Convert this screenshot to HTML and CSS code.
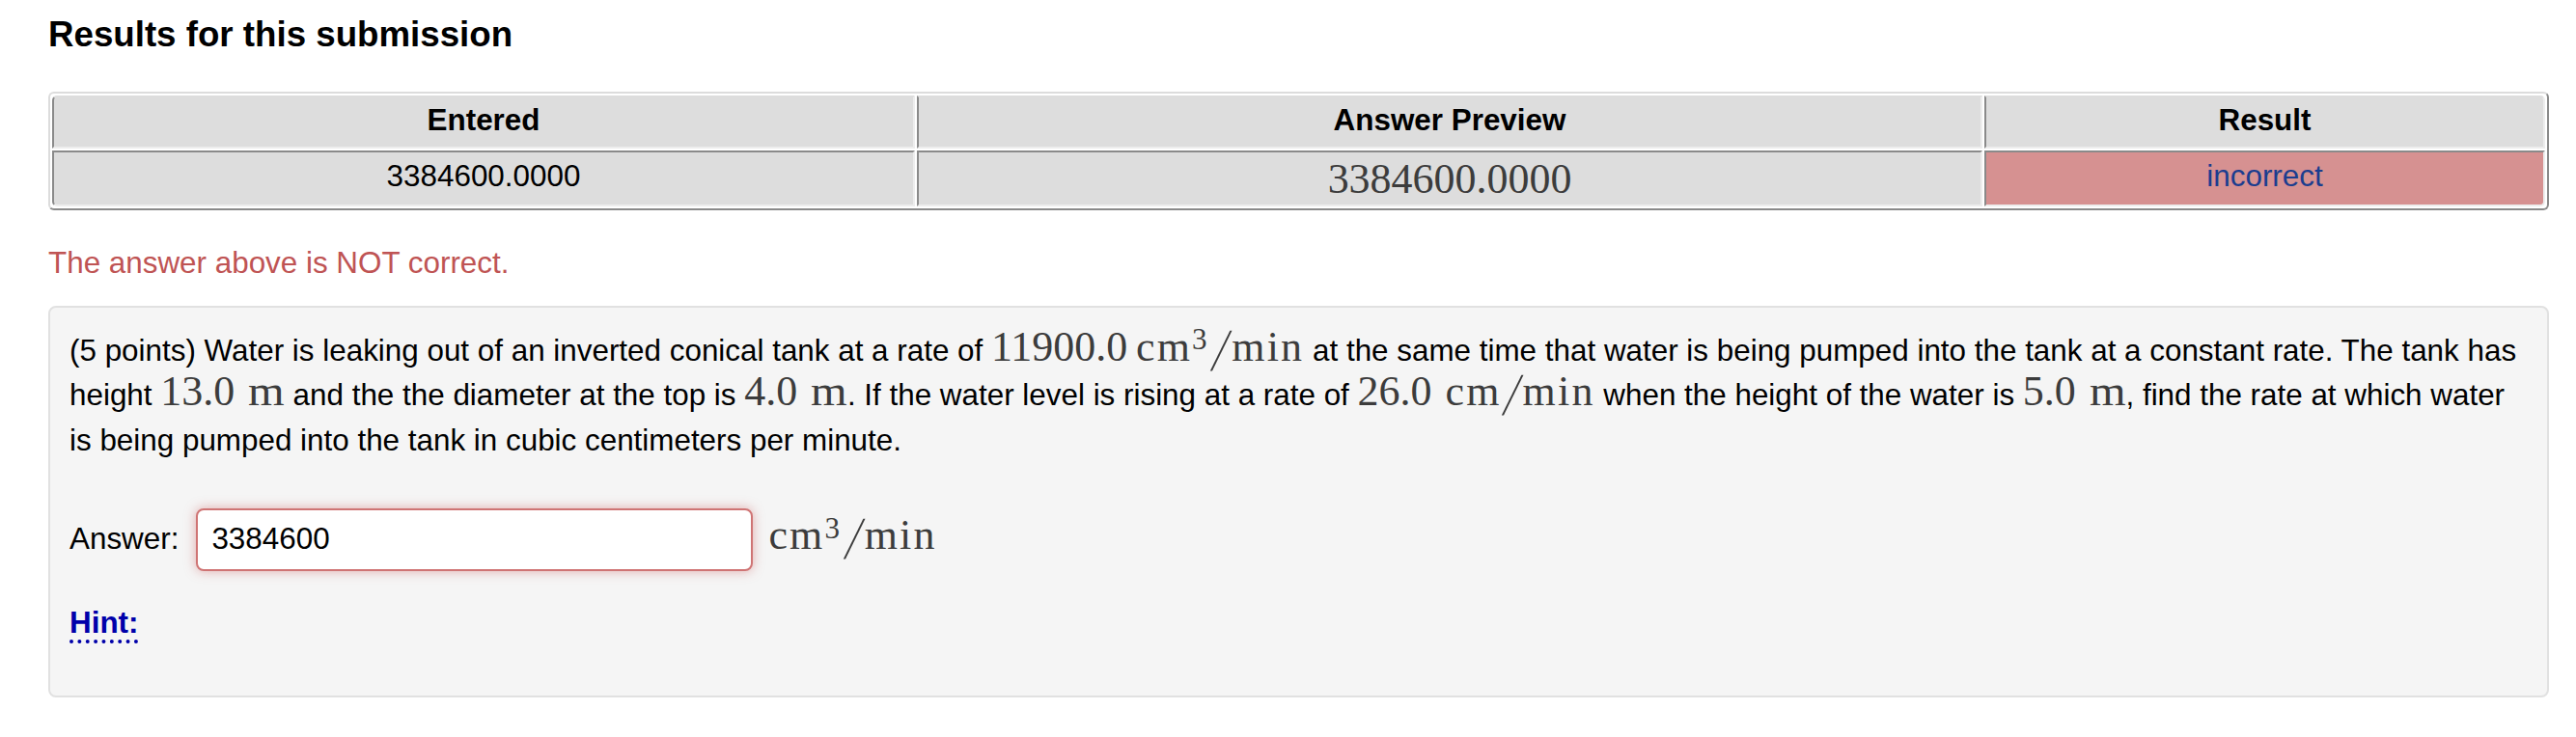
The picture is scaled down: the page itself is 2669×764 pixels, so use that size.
FILE: index.html
```html
<!DOCTYPE html>
<html lang="en">
<head>
<meta charset="utf-8">
<title>Results for this submission</title>
<link rel="stylesheet" href="styles.css">
</head>
<body>
<div class="page">
  <h3 class="title">Results for this submission</h3>
  <table class="results">
    <tr>
      <th class="c1">Entered</th>
      <th class="c2">Answer Preview</th>
      <th class="c3">Result</th>
    </tr>
    <tr>
      <td>3384600.0000</td>
      <td><span class="m preview">3384600.0000</span></td>
      <td class="bad">incorrect</td>
    </tr>
  </table>
  <p class="msg">The answer above is NOT correct.</p>
  <div class="problem">
    <p class="qtext">(5 points) Water is leaking out of an inverted conical tank at a rate of <span class="m">11900.0<span class="thin"></span><span class="u">cm</span><sup>3</sup><span class="sl">/</span><span class="u">min</span></span> at the same time that water is being pumped into the tank at a constant rate. The tank has height <span class="m">13.0<span class="sp"></span><span class="mm">m</span></span> and the the diameter at the top is <span class="m">4.0<span class="sp"></span><span class="mm">m</span></span>. If the water level is rising at a rate of <span class="m">26.0<span class="sp"></span><span class="u">cm</span><span class="sl">/</span><span class="u">min</span></span> when the height of the water is <span class="m">5.0<span class="sp"></span><span class="mm">m</span></span>, find the rate at which water is being pumped into the tank in cubic centimeters per minute.</p>
    <div class="answer-line"><span class="lbl">Answer:</span><input class="ans" type="text" value="3384600"><span class="m units"><span class="u">cm</span><sup>3</sup><span class="sl">/</span><span class="u">min</span></span></div>
    <div class="hint"><a class="knowl">Hint:</a></div>
  </div>
</div>
</body>
</html>
```

FILE: styles.css
```css
body {
  margin: 0;
  background: #ffffff;
  color: #000000;
  font-family: "Liberation Sans", Arial, sans-serif;
  font-size: 31.4px;
}

.page {
  width: 2591px;
  margin-left: 50px;
  padding-top: 1px;
}

.title {
  font-size: 36.7px;
  font-weight: bold;
  line-height: 42px;
  margin: 13.6px 0 38.4px;
}

/* results table */
.results {
  width: 2591px;
  table-layout: fixed;
  border-collapse: separate;
  border-spacing: 2px;
  border: 2px solid;
  border-color: #dcdcdc #8a8a8a #8a8a8a #dcdcdc;
  border-radius: 6px;
}

.results th,
.results td {
  box-sizing: border-box;
  background: #dddddd;
  text-align: center;
  border: 2px solid;
  line-height: 45px;
  white-space: nowrap;
}

.results th {
  font-weight: bold;
  padding: 1px 4px 5px;
  border-color: #dddddd #ededed #ededed #8a8a8a;
}

.results td {
  padding: 2px 4px 7px;
  border-color: #8a8a8a #ededed #ededed #8a8a8a;
}

.results .c1 { width: 894px; }
.results .c2 { width: 1104px; }
.results .c3 { width: 581px; }

.results tr:first-child th:first-child { border-top-left-radius: 5px; }
.results tr:first-child th:last-child { border-top-right-radius: 5px; }
.results tr:last-child td:first-child { border-bottom-left-radius: 5px; }
.results tr:last-child td:last-child { border-bottom-right-radius: 5px; }

.results td.bad {
  background: #d69191;
  color: #1b3d8f;
}

.msg {
  color: #bf5454;
  line-height: 45px;
  margin: 31.6px 0 22.4px;
}

/* math rendering */
.m {
  font-family: "Liberation Serif", "Times New Roman", serif;
  font-size: 1.4em;
  line-height: 0;
  color: #3c3c3c;
  white-space: nowrap;
}

.m .u {
  letter-spacing: 0.05em;
}

.m .mm {
  display: inline-block;
  transform-origin: left center;
  transform: scaleX(1.1);
  margin-right: 0.078em;
}

.m .thin {
  display: inline-block;
  width: 0.2em;
}

.m .sp {
  display: inline-block;
  width: 0.32em;
}

.m sup {
  font-size: 0.707em;
  line-height: 0;
  vertical-align: 0.37em;
  margin-right: 0.12em;
}

.m .sl {
  display: inline-block;
  width: 0.5em;
  text-align: center;
  transform: translateY(0.09em) skewX(-14deg) scaleY(1.42);
}

.preview {
  vertical-align: -6.5px;
}

/* problem box */
.problem {
  box-sizing: border-box;
  background: #f5f5f5;
  border: 2px solid #e1e1e1;
  border-radius: 8px;
  padding: 22px 20px 51.6px;
  line-height: 46.5px;
}

.qtext {
  margin: 0;
}

.answer-line {
  margin-top: 46.5px;
}

.lbl {
  margin-right: 18px;
}

.ans {
  box-sizing: border-box;
  width: 577px;
  height: 65px;
  padding: 0 14px;
  margin: 0 16px 0 0;
  font-family: "Liberation Sans", Arial, sans-serif;
  font-size: 31.4px;
  color: #000000;
  background: #ffffff;
  border: 2px solid #cf7474;
  border-radius: 8px;
  box-shadow: 0 0 12px rgba(205, 95, 95, 0.5);
  outline: none;
  vertical-align: baseline;
}

.hint {
  margin-top: 30.9px;
}

.knowl {
  color: #0000aa;
  font-weight: bold;
  text-decoration: none;
  border-bottom: 4px dotted #0000aa;
  cursor: pointer;
}
```
